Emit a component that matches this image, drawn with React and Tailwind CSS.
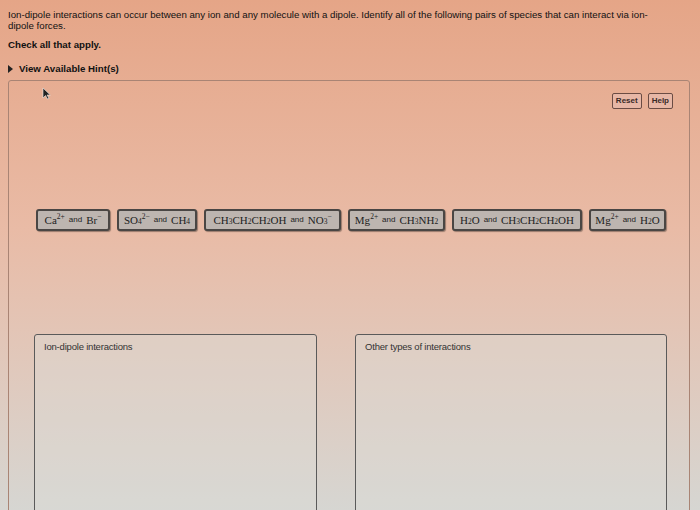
import React from 'react';

const serif = { fontFamily: '"Liberation Serif", "Times New Roman", serif' };

// a chemistry chip like "Ca²⁺ and Br⁻"
const Chip = ({ children, w }) => (
  <div
    className={`${w} h-[22px] flex items-center justify-center rounded-[3px] border-2 border-[#4a4644] bg-[#bdb5b0] shadow-[1px_1px_1px_rgba(0,0,0,0.35)] text-[11px] text-[#222] whitespace-nowrap`}
    style={serif}
  >
    {children}
  </div>
);

const And = () => (
  <span className="mx-[4px] text-[8px]" style={{ fontFamily: '"Liberation Sans", Arial, sans-serif' }}>
    and
  </span>
);

const Sub = ({ children }) => <sub className="text-[7.5px] bottom-[-2px]">{children}</sub>;
const Sup = ({ children }) => <sup className="text-[7.5px] top-[-3px]">{children}</sup>;

const Bin = ({ label, w }) => (
  <div className={`${w} h-[190px] rounded-t-[3px] border border-[#5a5a5a] bg-[#dcdcd8]/40 px-[9px] pt-[5px]`}>
    <div className="text-[9.5px] text-[#333] tracking-[-0.2px]">{label}</div>
  </div>
);

export default function App() {
  return (
    <div
      className="w-[700px] h-[510px] overflow-hidden bg-linear-to-b from-[#e5a587] via-[#e9bba6] via-45% to-[#d6d6d2] text-[#111]"
      style={{ fontFamily: '"Liberation Sans", Arial, sans-serif' }}
    >
      <div className="pl-[8px] pt-[9px] text-[9.7px] leading-[11px] pr-[40px]">
        Ion-dipole interactions can occur between any ion and any molecule with a dipole. Identify all of the following pairs of species that can interact via ion-dipole forces.
      </div>
      <div className="pl-[8px] mt-[7px] text-[9.7px] font-bold">Check all that apply.</div>
      <div className="pl-[8px] mt-[9px] flex items-center gap-[6px] text-[9.7px] font-bold">
        <span className="w-0 h-0 border-y-[4px] border-y-transparent border-l-[5px] border-l-[#222]" />
        View Available Hint(s)
      </div>

      <div className="relative ml-[8px] mr-[10px] mt-[4px] h-[460px] rounded-[3px] border border-[#a98474]">
        <svg className="absolute left-[33px] top-[6px]" width="9" height="13" viewBox="0 0 9 13">
          <path d="M1 1 L1 11 L3.5 8.5 L5.5 12 L7 11.3 L5 8 L8.3 8 Z" fill="#222" stroke="#eee" strokeWidth="0.6" />
        </svg>

        <div className="flex justify-end gap-[6px] pr-[16px] pt-[12px]">
          <button className="h-[16px] px-[3px] rounded-[2px] border border-[#6b4c44] bg-[#e7b7a6] text-[8px] font-bold text-[#3a2a26]">
            Reset
          </button>
          <button className="h-[16px] px-[3px] rounded-[2px] border border-[#6b4c44] bg-[#e7b7a6] text-[8px] font-bold text-[#3a2a26]">
            Help
          </button>
        </div>

        <div className="flex gap-[7px] pl-[27px] mt-[100px]">
          <Chip w="w-[74px]">
            Ca<Sup>2+</Sup><And />Br<Sup>−</Sup>
          </Chip>
          <Chip w="w-[80px]">
            SO<Sub>4</Sub><Sup>2−</Sup><And />CH<Sub>4</Sub>
          </Chip>
          <Chip w="w-[137px]">
            CH<Sub>3</Sub>CH<Sub>2</Sub>CH<Sub>2</Sub>OH<And />NO<Sub>3</Sub><Sup>−</Sup>
          </Chip>
          <Chip w="w-[97px]">
            Mg<Sup>2+</Sup><And />CH<Sub>3</Sub>NH<Sub>2</Sub>
          </Chip>
          <Chip w="w-[130px]">
            H<Sub>2</Sub>O<And />CH<Sub>3</Sub>CH<Sub>2</Sub>CH<Sub>2</Sub>OH
          </Chip>
          <Chip w="w-[77px]">
            Mg<Sup>2+</Sup><And />H<Sub>2</Sub>O
          </Chip>
        </div>

        <div className="flex gap-[38px] pl-[25px] mt-[103px]">
          <Bin label="Ion-dipole interactions" w="w-[283px]" />
          <Bin label="Other types of interactions" w="w-[312px]" />
        </div>
      </div>
    </div>
  );
}
